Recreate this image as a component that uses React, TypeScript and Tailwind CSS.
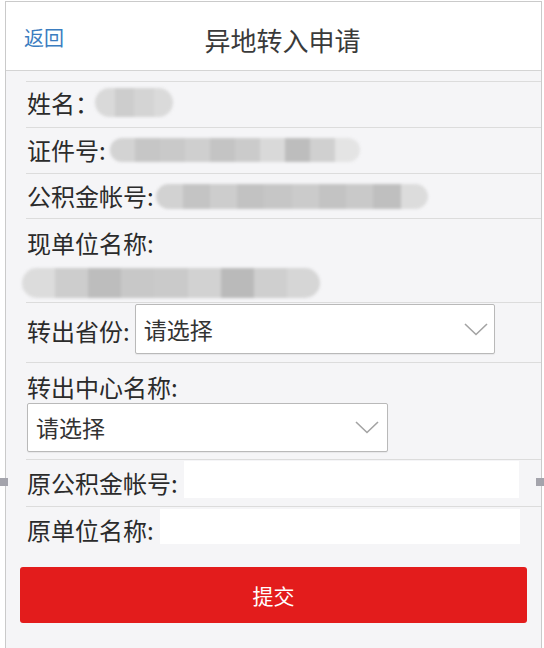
import React from 'react';

const font = "font-['Noto_Sans_CJK_SC','Noto_Sans',sans-serif]";

function Chevron() {
  return (
    <svg width="24" height="13" viewBox="0 0 24 13" fill="none">
      <polyline points="1,1 12,11.5 23,1" stroke="#a3a3a3" strokeWidth="1.6" />
    </svg>
  );
}

// mosaic placeholder for the blurred personal data
function Masked({ className, cells }: { className: string; cells: string[] }) {
  return (
    <div className={`flex overflow-hidden rounded-full blur-[1.5px] ${className}`}>
      {cells.map((c, i) => (
        <div key={i} className={`h-full flex-1 ${c}`} />
      ))}
    </div>
  );
}

export default function App() {
  return (
    <div className={`relative h-[648px] w-[544px] overflow-hidden bg-white ${font}`}>
      <div className="ml-[5px] mt-px h-[647px] w-[537px] border border-b-0 border-[#cacaca] bg-[#f5f5f7]">
        {/* header */}
        <div className="relative flex h-[69px] items-center border-b border-[#d4d4d4] bg-white pt-[8px]">
          <span className="absolute left-[18px] top-[26px] text-[20px] leading-none text-[#3b7dc0]">返回</span>
          <h1 className="w-full pl-[18px] text-center text-[26px] font-normal leading-none text-[#3a3a3a]">异地转入申请</h1>
        </div>

        <div className="ml-[20px] mt-[10px] text-[#2b2b2b]">
          <div className="flex h-[46px] items-center border-t border-[#dcdcdc] pl-[1px]">
            <span className="-mt-[4px] text-[24px] leading-none">姓名：</span>
            <Masked
              className="-mt-[4px] ml-[-4px] h-[29px] w-[78px]"
              cells={['bg-[#d9d9d9]', 'bg-[#cdcdcd]', 'bg-[#d4d4d4]', 'bg-[#dadada]']}
            />
          </div>
          <div className="flex h-[46px] items-center border-t border-[#dcdcdc] pl-[1px]">
            <span className="-mt-[2px] text-[24px] leading-none">证件号:</span>
            <Masked
              className="-mt-[2px] ml-[4px] h-[24px] w-[250px]"
              cells={[
                'bg-[#d3d3d3]',
                'bg-[#c6c6c6]',
                'bg-[#c9c9c9]',
                'bg-[#cfcfcf]',
                'bg-[#c4c4c4]',
                'bg-[#cbcbcb]',
                'bg-[#d9d9d9]',
                'bg-[#bdbdbd]',
                'bg-[#d0d0d0]',
                'bg-[#e4e4e4]',
              ]}
            />
          </div>
          <div className="flex h-[45px] items-center border-t border-[#dcdcdc] pl-[1px]">
            <span className="text-[24px] leading-none">公积金帐号:</span>
            <Masked
              className="ml-[2px] h-[25px] w-[272px]"
              cells={[
                'bg-[#d2d2d2]',
                'bg-[#c4c4c4]',
                'bg-[#cdcdcd]',
                'bg-[#c2c2c2]',
                'bg-[#c6c6c6]',
                'bg-[#cbcbcb]',
                'bg-[#c3c3c3]',
                'bg-[#c9c9c9]',
                'bg-[#bfbfbf]',
                'bg-[#dcdcdc]',
              ]}
            />
          </div>
          <div className="h-[84px] border-t border-[#dcdcdc] pl-[1px] pt-[12px]">
            <div className="text-[24px] leading-none">现单位名称:</div>
            <Masked
              className="ml-[-5px] mt-[13px] h-[30px] w-[298px]"
              cells={[
                'bg-[#dcdcdc]',
                'bg-[#cdcdcd]',
                'bg-[#bdbdbd]',
                'bg-[#c8c8c8]',
                'bg-[#cacaca]',
                'bg-[#d2d2d2]',
                'bg-[#bababa]',
                'bg-[#cfcfcf]',
                'bg-[#d6d6d6]',
              ]}
            />
          </div>
          <div className="flex h-[60px] items-start border-t border-[#dcdcdc] pl-[1px] pt-[1px]">
            <span className="mt-[15px] text-[24px] leading-none">转出省份:</span>
            <div className="ml-[5px] flex h-[50px] w-[360px] items-center justify-between rounded-[2px] border border-[#b9b9b9] bg-white pl-[8px] pr-[6px] shadow-[0_1px_1px_rgba(0,0,0,0.06)]">
              <span className="text-[23px] leading-none text-[#333]">请选择</span>
              <Chevron />
            </div>
          </div>
          <div className="h-[97px] border-t border-[#dcdcdc] pl-[1px] pt-[12px]">
            <div className="text-[24px] leading-none">转出中心名称:</div>
            <div className="mt-[4px] flex h-[49px] w-[361px] items-center justify-between rounded-[2px] border border-[#b9b9b9] bg-white pl-[8px] pr-[8px] shadow-[0_1px_1px_rgba(0,0,0,0.06)]">
              <span className="text-[23px] leading-none text-[#333]">请选择</span>
              <Chevron />
            </div>
          </div>
          <div className="flex h-[47px] items-start border-t border-[#dcdcdc] pl-[1px] pt-[1px]">
            <span className="mt-[10px] text-[24px] leading-none">原公积金帐号:</span>
            <div className="ml-[6px] h-[37px] w-[335px] bg-white" />
          </div>
          <div className="flex h-[44px] items-start border-t border-[#dcdcdc] pl-[1px] pt-[2px]">
            <span className="mt-[9px] text-[24px] leading-none">原单位名称:</span>
            <div className="ml-[6px] h-[35px] w-[360px] bg-white" />
          </div>
        </div>

        <div className="ml-[14px] mt-[17px] flex h-[56px] w-[507px] items-center justify-center rounded-[3px] bg-[#e31c1c]">
          <span className="text-[21px] leading-none text-white">提交</span>
        </div>
      </div>

      {/* small grey markers on the frame edges */}
      <div className="absolute left-0 top-[478px] h-[8px] w-[8px] bg-[#a4a4ac]" />
      <div className="absolute right-0 top-[478px] h-[8px] w-[8px] bg-[#a4a4ac]" />
    </div>
  );
}
